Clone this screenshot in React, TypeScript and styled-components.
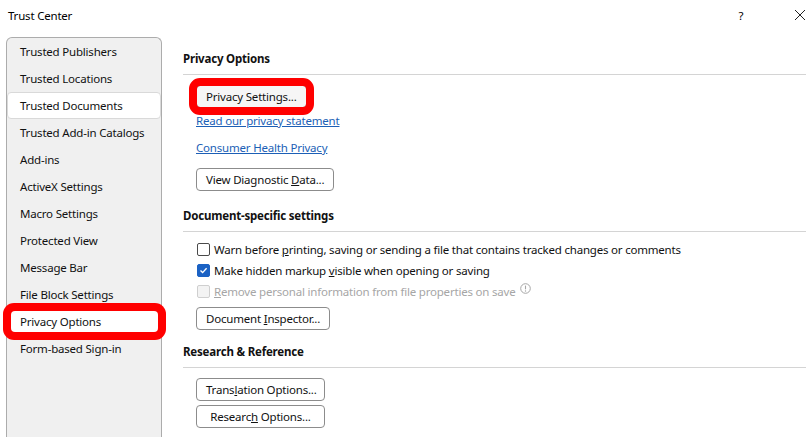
import React from 'react';
import styled, { createGlobalStyle } from 'styled-components';

const GlobalStyle = createGlobalStyle`
  html, body {
    margin: 0;
    padding: 0;
    background: #ffffff;
    overflow: hidden;
  }
  body {
    font-family: 'Noto Sans', 'Open Sans', sans-serif;
    font-size: 11.5px;
    letter-spacing: -0.2px;
    color: #111;
  }
`;

const Window = styled.div`
  width: 812px;
  height: 437px;
  display: flex;
  flex-direction: column;
  background: #fff;
`;

const TitleBar = styled.div`
  height: 30px;
  display: flex;
  align-items: center;
  padding: 0 4px 0 8px;
  flex-shrink: 0;
`;

const Title = styled.div`
  flex: 1;
  color: #000;
`;

const TitleButton = styled.div<{ gap?: number }>`
  width: 16px;
  height: 16px;
  display: flex;
  align-items: center;
  justify-content: center;
  color: #000;
  margin-left: ${(p) => p.gap ?? 0}px;
`;

const Body = styled.div`
  flex: 1;
  display: flex;
  gap: 21px;
  padding: 7px 0 0 6px;
  min-height: 0;
`;

const Sidebar = styled.ul`
  list-style: none;
  margin: 0;
  padding: 0;
  width: 154px;
  height: 420px;
  flex-shrink: 0;
  background: #f0f0f0;
  border: 1px solid #acacac;
  border-bottom: none;
  border-radius: 6px 6px 0 0;
`;

const NavItem = styled.li<{ selected?: boolean; marked?: boolean }>`
  position: relative;
  height: ${(p) => (p.marked ? '21px' : '27px')};
  margin: ${(p) => (p.marked ? '3px 3px 3px 4px' : '0')};
  display: flex;
  align-items: center;
  padding-left: ${(p) => (p.marked ? '8px' : '12px')};
  box-sizing: border-box;
  color: #111;
  background: ${(p) => (p.selected || p.marked ? '#ffffff' : 'transparent')};
  border: 1px solid ${(p) => (p.selected ? '#d9d9d9' : 'transparent')};
  border-radius: 4px;
  box-shadow: ${(p) => (p.marked ? '0 0 0 8px #ff0000' : 'none')};
  z-index: ${(p) => (p.marked ? 2 : 1)};
`;

const Content = styled.div`
  flex: 1;
  display: flex;
  flex-direction: column;
  align-items: flex-start;
  padding-top: 14px;
  padding-right: 6px;
`;

const SectionTitle = styled.div<{ top?: number }>`
  align-self: stretch;
  font-weight: 700;
  line-height: 16px;
  padding-bottom: 7px;
  border-bottom: 1px solid #d4d4d4;
  margin-top: ${(p) => p.top ?? 0}px;
  color: #111;
`;

const Indent = styled.div`
  display: flex;
  flex-direction: column;
  align-items: flex-start;
  padding-left: 13px;
`;

const Button = styled.button<{ top?: number; fixed?: number; marked?: boolean }>`
  font: inherit;
  letter-spacing: inherit;
  color: #111;
  height: 23px;
  padding: 0 9px;
  width: ${(p) => (p.fixed ? `${p.fixed}px` : 'auto')};
  margin-top: ${(p) => p.top ?? 0}px;
  background: ${(p) => (p.marked ? '#f6f6f6' : '#ffffff')};
  border: 1px solid #8c8c8c;
  border-radius: 4px;
  outline: ${(p) => (p.marked ? '8px solid #ff0000' : 'none')};
  outline-offset: -1px;
  white-space: nowrap;
`;

const Link = styled.a<{ top?: number }>`
  color: #1c5fb6;
  text-decoration: underline;
  line-height: 16px;
  margin-top: ${(p) => p.top ?? 0}px;
  cursor: pointer;
`;

const CheckRow = styled.label<{ disabled?: boolean; top?: number }>`
  height: 21px;
  display: flex;
  align-items: center;
  gap: 4px;
  margin-top: ${(p) => p.top ?? 0}px;
  color: ${(p) => (p.disabled ? '#a6a6a6' : '#111')};
  white-space: nowrap;
`;

const Box = styled.span<{ checked?: boolean; disabled?: boolean }>`
  width: 13px;
  height: 13px;
  box-sizing: border-box;
  margin-left: 1px;
  border-radius: 2px;
  border: 1px solid ${(p) => (p.checked ? '#1b62c4' : p.disabled ? '#cfcfcf' : '#4a4a4a')};
  background: ${(p) => (p.checked ? '#1b62c4' : p.disabled ? '#f3f3f3' : '#ffffff')};
  display: flex;
  align-items: center;
  justify-content: center;
  flex-shrink: 0;
`;

const InfoMark = styled.span`
  display: inline-flex;
  margin-left: 1px;
  transform: translateY(-3px);
`;

const navItems = [
  'Trusted Publishers',
  'Trusted Locations',
  'Trusted Documents',
  'Trusted Add-in Catalogs',
  'Add-ins',
  'ActiveX Settings',
  'Macro Settings',
  'Protected View',
  'Message Bar',
  'File Block Settings',
  'Privacy Options',
  'Form-based Sign-in',
];

function Check({ checked, disabled }: { checked?: boolean; disabled?: boolean }) {
  return (
    <Box checked={checked} disabled={disabled}>
      {checked && (
        <svg width="9" height="9" viewBox="0 0 9 9">
          <path d="M1.5 4.6 L3.6 6.6 L7.6 2.2" fill="none" stroke="#fff" strokeWidth="1.4" />
        </svg>
      )}
    </Box>
  );
}

export default function App() {
  return (
    <>
      <GlobalStyle />
      <Window>
        <TitleBar>
          <Title>Trust Center</Title>
          <TitleButton>?</TitleButton>
          <TitleButton gap={43}>
            <svg width="12" height="12" viewBox="0 0 12 12">
              <path d="M1 1 L11 11 M11 1 L1 11" stroke="#222" strokeWidth="1" />
            </svg>
          </TitleButton>
        </TitleBar>
        <Body>
          <Sidebar>
            {navItems.map((item) => (
              <NavItem
                key={item}
                selected={item === 'Trusted Documents'}
                marked={item === 'Privacy Options'}
              >
                {item}
              </NavItem>
            ))}
          </Sidebar>
          <Content>
            <SectionTitle>Privacy Options</SectionTitle>
            <Indent>
              <Button marked top={10}>Privacy Settings...</Button>
              <Link top={5}>Read our privacy statement</Link>
              <Link top={11}>Consumer Health Privacy</Link>
              <Button top={12}>
                View Diagnostic <u>D</u>ata...
              </Button>
            </Indent>
            <SectionTitle top={17}>Document-specific settings</SectionTitle>
            <Indent>
              <CheckRow top={7}>
                <Check />
                <span>
                  Warn before <u>p</u>rinting, saving or sending a file that contains tracked changes or comments
                </span>
              </CheckRow>
              <CheckRow>
                <Check checked />
                <span>
                  Make hidden markup <u>v</u>isible when opening or saving
                </span>
              </CheckRow>
              <CheckRow disabled>
                <Check disabled />
                <span>
                  <u>R</u>emove personal information from file properties on save
                </span>
                <InfoMark>
                  <svg width="11" height="11" viewBox="0 0 11 11">
                    <circle cx="5.5" cy="5.5" r="4.8" fill="none" stroke="#a6a6a6" strokeWidth="1" />
                    <path d="M5.5 2.6 V6.3" stroke="#a6a6a6" strokeWidth="1.1" />
                    <circle cx="5.5" cy="8" r="0.7" fill="#a6a6a6" />
                  </svg>
                </InfoMark>
              </CheckRow>
              <Button top={5}>
                Document <u>I</u>nspector...
              </Button>
            </Indent>
            <SectionTitle top={14}>Research &amp; Reference</SectionTitle>
            <Indent>
              <Button top={10} fixed={129}>
                Trans<u>l</u>ation Options...
              </Button>
              <Button top={4} fixed={129}>
                Researc<u>h</u> Options...
              </Button>
            </Indent>
          </Content>
        </Body>
      </Window>
    </>
  );
}
